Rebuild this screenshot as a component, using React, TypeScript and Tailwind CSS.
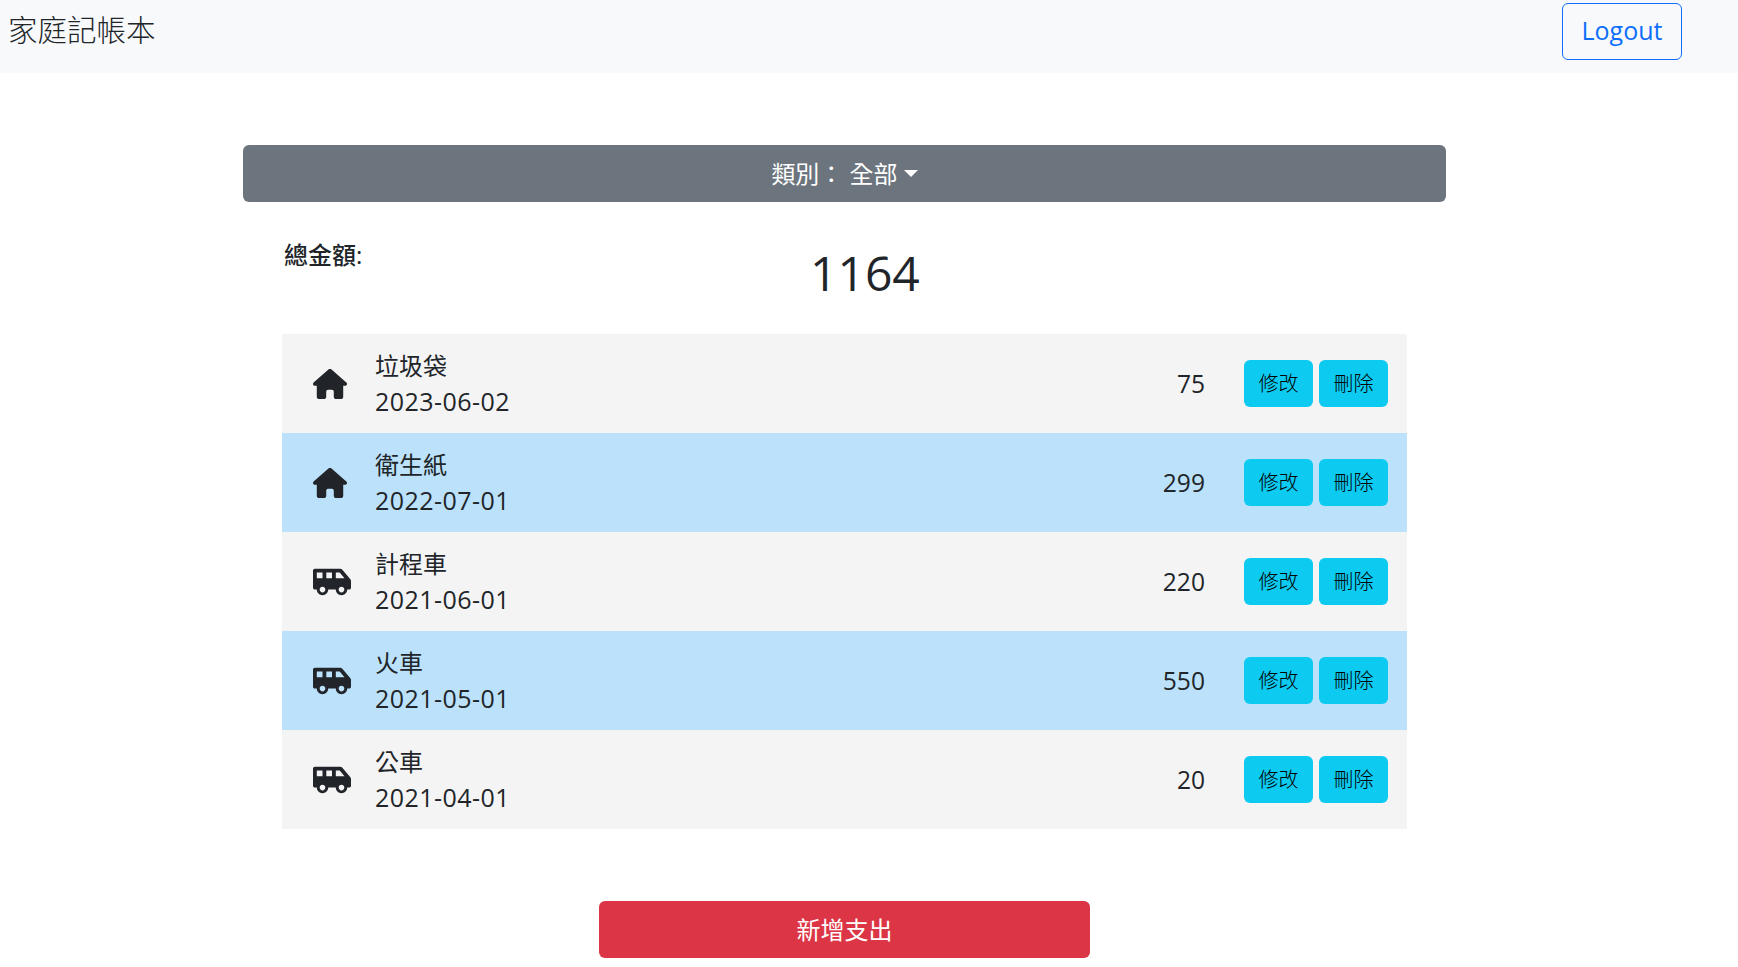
import React from 'react';
import { FaHouse } from 'react-icons/fa6';
import { FaShuttleVan } from 'react-icons/fa';

const font = "font-['Open_Sans','Noto_Sans_CJK_TC',sans-serif]";

const expenses = [
  { name: '垃圾袋', date: '2023-06-02', amount: 75, icon: FaHouse, bg: 'bg-[#f4f4f4]' },
  { name: '衛生紙', date: '2022-07-01', amount: 299, icon: FaHouse, bg: 'bg-[#bbe2fa]' },
  { name: '計程車', date: '2021-06-01', amount: 220, icon: FaShuttleVan, bg: 'bg-[#f4f4f4]' },
  { name: '火車', date: '2021-05-01', amount: 550, icon: FaShuttleVan, bg: 'bg-[#bbe2fa]' },
  { name: '公車', date: '2021-04-01', amount: 20, icon: FaShuttleVan, bg: 'bg-[#f4f4f4]' },
];

function ActionButton({ label }: { label: string }) {
  return (
    <button className="h-[47px] w-[69px] rounded-md bg-[#0dcaf0] text-[20px] font-light text-black">
      {label}
    </button>
  );
}

export default function App() {
  return (
    <div className={`${font} h-[967px] overflow-hidden bg-white text-[#212529]`}>
      <nav className="flex h-[73px] items-start justify-between bg-[#f8f9fa] pl-[8px] pr-[56px] pt-[3px]">
        <span className="mt-[9px] text-[29.5px] font-light leading-[36px] text-[#212529]">家庭記帳本</span>
        <button className="h-[57px] w-[120px] rounded-md border border-[#0d6efd] pb-[3px] text-[25px] leading-[50px] text-[#0d6efd]">
          Logout
        </button>
      </nav>

      <main className="ml-[243px] w-[1203px] pt-[72px]">
        <button className="flex h-[57px] w-full items-center justify-center rounded-md bg-[#6c757d] text-[24px] text-white">
          類別： 全部
          <span className="ml-[6px] h-0 w-0 border-x-[7.5px] border-t-[7.5px] border-x-transparent border-t-white" />
        </button>

        <div className="relative h-[132px]">
          <span className="absolute left-[41px] top-[37px] text-[24px] font-medium leading-[32px]">總金額:</span>
          <div className="pl-[567px] pt-[39px] text-[48px] leading-[64px]">1164</div>
        </div>

        <ul className="ml-[39px] w-[1125px]">
          {expenses.map((item) => {
            const Icon = item.icon;
            return (
              <li key={item.name} className={`flex h-[99px] items-center ${item.bg}`}>
                <div className="flex w-[93px] justify-start pl-[31px]">
                  <Icon className={item.icon === FaHouse ? 'text-[34px]' : 'text-[38px]'} />
                </div>
                <div className="flex-1 text-[24px] leading-[36px]">
                  <div>{item.name}</div>
                  <div className="text-[25px] leading-[35px] tracking-[0.45px]">{item.date}</div>
                </div>
                <div className="pt-[2px] text-right text-[24.6px]">{item.amount}</div>
                <div className="ml-[39px] mr-[19px] flex gap-[6px]">
                  <ActionButton label="修改" />
                  <ActionButton label="刪除" />
                </div>
              </li>
            );
          })}
        </ul>

        <div className="mt-[72px] flex pl-[356px]">
          <button className="h-[57px] w-[491px] rounded-md bg-[#dc3545] text-[24px] text-white">新增支出</button>
        </div>
      </main>
    </div>
  );
}
